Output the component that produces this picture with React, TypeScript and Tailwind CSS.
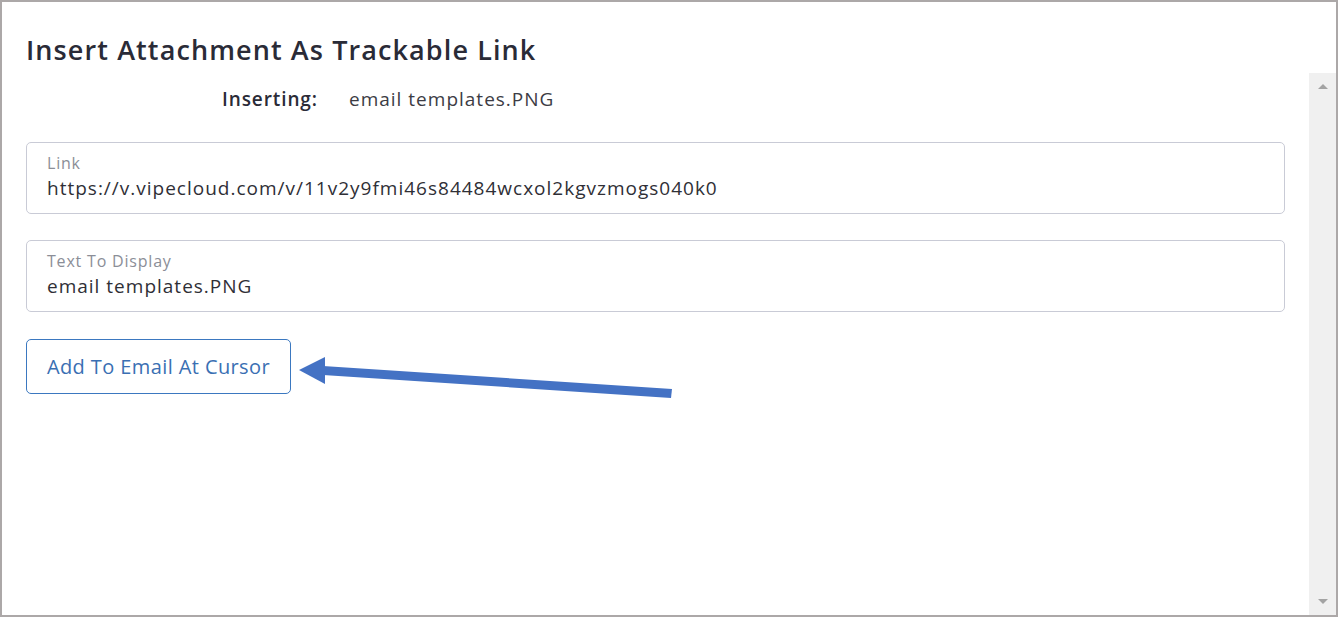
import React from 'react';

const font = { fontFamily: '"Open Sans", "Liberation Sans", sans-serif' };

function Field({ label, value }: { label: string; value: string }) {
  return (
    <div className="h-[72px] w-full border border-[#c9cbd6] rounded-[5px] px-[20px] pt-[10px] flex flex-col">
      <span className="text-[16px] leading-[20px] tracking-[0.8px] text-[#8b8e97]">{label}</span>
      <span className="text-[19px] leading-[26px] tracking-[1px] text-[#2f2f36] mt-[2px]">{value}</span>
    </div>
  );
}

export default function App() {
  return (
    <div style={font} className="relative w-[1338px] h-[617px] bg-white border-2 border-[#aca8a8] flex flex-col overflow-hidden">
      <div className="h-[71px] shrink-0 pl-[24px] pt-[32px]">
        <h1 className="text-[27px] leading-[32px] tracking-[1.1px] font-semibold text-[#2a2b37]">Insert Attachment As Trackable Link</h1>
      </div>

      <div className="flex-1 flex min-h-0">
        <div className="flex-1 pl-[24px] pr-[24px] pt-[13px] flex flex-col">
          <div className="flex items-center h-[26px] text-[19px] tracking-[1px] text-[#3c3c44]">
            <span className="ml-[196px] w-[127px] font-semibold tracking-[0.9px] text-[#2a2b37]">Inserting:</span>
            <span>email templates.PNG</span>
          </div>

          <div className="mt-[30px] flex flex-col gap-[26px]">
            <Field label="Link" value="https://v.vipecloud.com/v/11v2y9fmi46s84484wcxol2kgvzmogs040k0" />
            <Field label="Text To Display" value="email templates.PNG" />
          </div>

          <div className="mt-[27px]">
            <button className="h-[55px] w-[265px] border border-[#3b78c0] rounded-[5px] text-[20px] tracking-[0.4px] text-[#3a6fb3] bg-white">
              Add To Email At Cursor
            </button>
          </div>
        </div>

        <div className="w-[27px] shrink-0 bg-[#f0f0f0] flex flex-col items-center justify-between py-[11px]">
          <div className="w-0 h-0 border-l-[5px] border-r-[5px] border-b-[5px] border-l-transparent border-r-transparent border-b-[#a3a3a3]" />
          <div className="w-0 h-0 border-l-[5px] border-r-[5px] border-t-[5px] border-l-transparent border-r-transparent border-t-[#a3a3a3]" />
        </div>
      </div>

      {/* annotation arrow */}
      <svg className="absolute left-0 top-0 pointer-events-none" width="1338" height="617">
        <polygon points="321,364 670,387 669,396 321,373" fill="#4472c4" />
        <polygon points="297,368 323,355 323,382" fill="#4472c4" />
      </svg>
    </div>
  );
}
